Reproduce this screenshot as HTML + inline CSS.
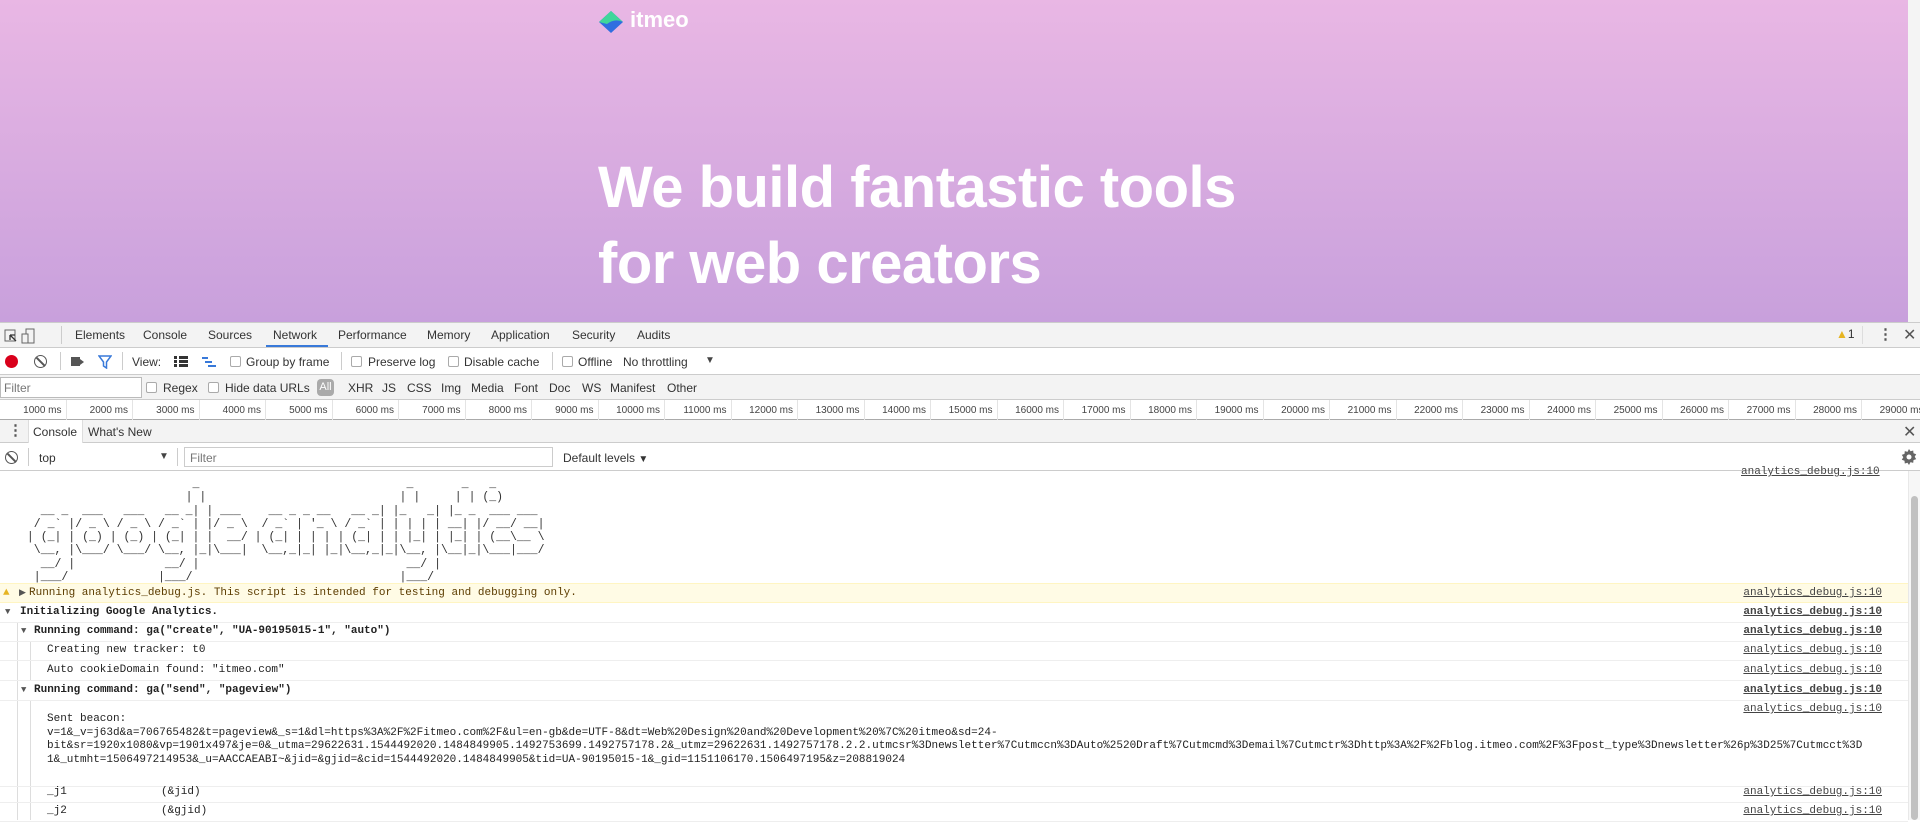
<!DOCTYPE html>
<html><head><meta charset="utf-8"><style>
*{margin:0;padding:0;box-sizing:border-box}
body{width:1920px;height:820px;overflow:hidden;background:#fff;font-family:"Liberation Sans",sans-serif;position:relative}
.abs{position:absolute;white-space:nowrap}
pre.abs{white-space:pre}
#hero{position:absolute;left:0;top:0;width:1908px;height:322px;background:linear-gradient(#e9b7e4,#c8a0dc)}
#sbtop{position:absolute;left:1908px;top:0;width:12px;height:322px;background:#f4f4f4}
h1{position:absolute;left:598px;top:150px;font-size:58px;line-height:76px;color:#fff;font-weight:bold;letter-spacing:-0.5px}
.bar{position:absolute;left:0;width:1920px;border-bottom:1px solid #ccc}
.t12{font-size:12px;color:#333}
.cb{display:inline-block;width:11px;height:11px;border:1px solid #aaa;border-radius:2px;background:#fff;position:absolute}
.mono{font-family:"Liberation Mono",monospace;font-size:11px}
.row{position:absolute;left:0;width:1908px;border-bottom:1px solid #eee;height:20px;line-height:19px;color:#222;overflow:hidden}
.lnk{position:absolute;right:26px;top:0;text-decoration:underline;color:#444}
.b{font-weight:bold}
</style></head><body>
<div id="hero"></div><div id="sbtop"></div>
<svg class="abs" style="left:598px;top:10px" width="26" height="24" viewBox="0 0 26 24"><path d="M13 1 L25 12 L13 23 L1 12Z" fill="#2f6ee0"/><path d="M13 1 L25 12 Q17 8 9 14 L1 12Z" fill="#3fd69a"/></svg>
<div class="abs" style="left:630px;top:7px;font-size:22px;font-weight:bold;color:#fff">itmeo</div>
<h1>We build fantastic tools<br>for web creators</h1>

<div class="bar" style="top:322px;height:26px;background:#f3f3f3;border-top:1px solid #ccc"></div>
<svg class="abs" style="left:4px;top:328px" width="36" height="16"><rect x="1" y="2" width="10" height="11" fill="none" stroke="#666"/><path d="M6 7l6 6M6 7v5M6 7h5" stroke="#333" stroke-width="1.3" fill="none"/><rect x="22" y="1" width="8" height="14" fill="none" stroke="#666"/><rect x="18" y="6" width="6" height="9" fill="#f3f3f3" stroke="#666"/></svg>
<div class="abs" style="left:61px;top:326px;width:1px;height:18px;background:#ccc"></div>
<div class="t12">
<span class="abs" style="left:75px;top:328px">Elements</span>
<span class="abs" style="left:143px;top:328px">Console</span>
<span class="abs" style="left:208px;top:328px">Sources</span>
<span class="abs" style="left:273px;top:328px">Network</span>
<span class="abs" style="left:338px;top:328px">Performance</span>
<span class="abs" style="left:427px;top:328px">Memory</span>
<span class="abs" style="left:491px;top:328px">Application</span>
<span class="abs" style="left:572px;top:328px">Security</span>
<span class="abs" style="left:637px;top:328px">Audits</span>
</div>
<div class="abs" style="left:266px;top:345px;width:62px;height:2px;background:#3879d9"></div>
<div class="abs" style="left:1836px;top:327px;font-size:12px;color:#333"><span style="color:#e6b422">▲</span>1</div>
<div class="abs" style="left:1862px;top:326px;width:1px;height:18px;background:#ddd"></div>
<div class="abs" style="left:1878px;top:325px;font-size:15px;color:#555;font-weight:bold">⋮</div>
<div class="abs" style="left:1903px;top:325px;font-size:16px;color:#555">✕</div>

<div class="bar" style="top:348px;height:27px;background:#fff"></div>
<div class="abs" style="left:5px;top:355px;width:13px;height:13px;border-radius:50%;background:#d9001b"></div>
<div class="abs" style="left:34px;top:355px;width:13px;height:13px;border-radius:50%;border:1.5px solid #555"></div>
<div class="abs" style="left:35px;top:361px;width:12px;height:1.5px;background:#555;transform:rotate(45deg)"></div>
<div class="abs" style="left:60px;top:352px;width:1px;height:18px;background:#ccc"></div>
<div class="abs" style="left:71px;top:357px;width:9px;height:9px;background:#555"></div><div class="abs" style="left:80px;top:359px;border:3px solid transparent;border-right:4px solid #555;transform:scaleX(-1)"></div>
<svg class="abs" style="left:98px;top:355px" width="14" height="14"><path d="M1 1h12l-4.5 6v6l-3-2V7Z" fill="none" stroke="#3879d9" stroke-width="1.5"/></svg>
<div class="abs" style="left:122px;top:352px;width:1px;height:18px;background:#ccc"></div>
<span class="abs t12" style="left:132px;top:355px">View:</span>
<svg class="abs" style="left:174px;top:356px" width="44" height="12"><g fill="#333"><rect x="0" y="0" width="3" height="3"/><rect x="5" y="0" width="9" height="3"/><rect x="0" y="4" width="3" height="3"/><rect x="5" y="4" width="9" height="3"/><rect x="0" y="8" width="3" height="3"/><rect x="5" y="8" width="9" height="3"/></g><g fill="#3879d9"><rect x="28" y="1" width="6" height="2"/><rect x="31" y="5" width="7" height="2"/><rect x="34" y="9" width="8" height="2"/></g></svg>
<span class="cb" style="left:230px;top:356px"></span><span class="abs t12" style="left:246px;top:355px">Group by frame</span>
<div class="abs" style="left:341px;top:352px;width:1px;height:18px;background:#ccc"></div>
<span class="cb" style="left:351px;top:356px"></span><span class="abs t12" style="left:368px;top:355px">Preserve log</span>
<span class="cb" style="left:448px;top:356px"></span><span class="abs t12" style="left:464px;top:355px">Disable cache</span>
<div class="abs" style="left:552px;top:352px;width:1px;height:18px;background:#ccc"></div>
<span class="cb" style="left:562px;top:356px"></span><span class="abs t12" style="left:578px;top:355px">Offline</span>
<span class="abs t12" style="left:623px;top:355px">No throttling</span>
<span class="abs" style="left:705px;top:355px;font-size:10px;color:#444">▼</span>

<div class="bar" style="top:375px;height:25px;background:#f3f3f3"></div>
<div class="abs" style="left:0;top:377px;width:142px;height:21px;background:#fff;border:1px solid #bbb"></div>
<span class="abs" style="left:4px;top:381px;font-size:12px;color:#777">Filter</span>
<span class="cb" style="left:146px;top:382px"></span><span class="abs t12" style="left:163px;top:381px">Regex</span>
<span class="cb" style="left:208px;top:382px"></span><span class="abs t12" style="left:225px;top:381px">Hide data URLs</span>
<span class="abs" style="left:317px;top:379px;width:17px;height:17px;border-radius:4px;background:#aaa;color:#fff;font-size:11px;line-height:17px;text-align:center">All</span>
<div class="t12">
<span class="abs" style="left:348px;top:381px">XHR</span><span class="abs" style="left:382px;top:381px">JS</span><span class="abs" style="left:407px;top:381px">CSS</span><span class="abs" style="left:441px;top:381px">Img</span><span class="abs" style="left:471px;top:381px">Media</span><span class="abs" style="left:514px;top:381px">Font</span><span class="abs" style="left:549px;top:381px">Doc</span><span class="abs" style="left:582px;top:381px">WS</span><span class="abs" style="left:610px;top:381px">Manifest</span><span class="abs" style="left:667px;top:381px">Other</span>
</div>

<div class="bar" style="top:400px;height:20px;background:#fff;border-bottom:1px solid #aaa"></div>
<div class="abs" style="left:0;top:400px;width:1920px;overflow:hidden;height:20px;display:flex;font-size:10px;color:#444">
<script>
for(let i=1;i<=29;i++)document.write('<div style="flex:none;width:66.5px;height:20px;border-right:1px solid #e4e4e4;text-align:right;padding:5px 4px 0 0;white-space:nowrap">'+i+'000 ms</div>');
</script>
</div>

<div class="bar" style="top:420px;height:23px;background:#f3f3f3"></div>
<div class="abs" style="left:8px;top:421px;font-size:15px;color:#555;font-weight:bold">⋮</div>
<div class="abs" style="left:28px;top:420px;width:55px;height:23px;background:#fff;border-left:1px solid #ddd;border-right:1px solid #ddd"></div>
<span class="abs t12" style="left:33px;top:425px">Console</span>
<span class="abs t12" style="left:88px;top:425px">What's New</span>
<div class="abs" style="left:1903px;top:422px;font-size:16px;color:#555">✕</div>

<div class="bar" style="top:443px;height:28px;background:#fff"></div>
<div class="abs" style="left:5px;top:451px;width:13px;height:13px;border-radius:50%;border:1.5px solid #555"></div>
<div class="abs" style="left:6px;top:457px;width:12px;height:1.5px;background:#555;transform:rotate(45deg)"></div>
<div class="abs" style="left:28px;top:448px;width:1px;height:18px;background:#ccc"></div>
<span class="abs t12" style="left:39px;top:451px">top</span>
<span class="abs" style="left:159px;top:451px;font-size:10px;color:#444">▼</span>
<div class="abs" style="left:177px;top:448px;width:1px;height:18px;background:#ccc"></div>
<div class="abs" style="left:184px;top:447px;width:369px;height:20px;border:1px solid #ccc"></div>
<span class="abs" style="left:190px;top:451px;font-size:12px;color:#777">Filter</span>
<span class="abs t12" style="left:563px;top:451px">Default levels <span style="font-size:10px">▼</span></span>
<svg class="abs" style="left:1901px;top:449px" width="16" height="16" viewBox="0 0 16 16"><path d="M8 0l1.5 2.3 2.7-.8.3 2.8 2.7 1-1.5 2.4 1.5 2.4-2.7 1-.3 2.8-2.7-.8L8 16l-1.5-2.3-2.7.8-.3-2.8-2.7-1L2.3 8.3.8 5.9l2.7-1 .3-2.8 2.7.8Z" fill="#666"/><circle cx="8" cy="8" r="2.5" fill="#fff"/></svg>

<div class="abs" style="left:1908px;top:471px;width:12px;height:349px;background:#f7f7f7;border-left:1px solid #e8e8e8"></div>
<div class="abs" style="left:1911px;top:496px;width:7px;height:324px;background:#c1c1c1;border-radius:4px"></div>
<div class="abs mono" style="left:1741px;top:466px;text-decoration:underline;color:#444">analytics_debug.js:10</div>
<pre class="abs mono" style="left:20px;top:478px;font-size:11.5px;line-height:13.3px;color:#333">                         _                              _       _   _
                        | |                            | |     | | (_)
   __ _  ___   ___   __ _| | ___    __ _ _ __   __ _| |_   _| |_ _  ___ ___
  / _` |/ _ \ / _ \ / _` | |/ _ \  / _` | '_ \ / _` | | | | | __| |/ __/ __|
 | (_| | (_) | (_) | (_| | |  __/ | (_| | | | | (_| | | |_| | |_| | (__\__ \
  \__, |\___/ \___/ \__, |_|\___|  \__,_|_| |_|\__,_|_|\__, |\__|_|\___|___/
   __/ |             __/ |                              __/ |
  |___/             |___/                              |___/</pre>

<div class="row mono" style="top:583px;background:#fffbe5;border-top:1px solid #fff5c2;border-bottom:1px solid #fff5c2;color:#5c3c00"><span class="abs" style="left:3px;top:0;color:#e6b422;font-size:11px">▲</span><span class="abs" style="left:19px;top:0;font-size:9px;color:#555">▶</span><span class="abs" style="left:29px">Running analytics_debug.js. This script is intended for testing and debugging only.</span><span class="lnk">analytics_debug.js:10</span></div>
<div class="row mono" style="top:603px"><span class="abs" style="left:5px;font-size:9px;color:#555">▼</span><span class="abs b" style="left:20px">Initializing Google Analytics.</span><span class="lnk b">analytics_debug.js:10</span></div>
<div class="abs" style="left:17px;top:623px;width:1px;height:197px;background:#ddd"></div>
<div class="row mono" style="top:622px"><span class="abs" style="left:21px;font-size:9px;color:#555">▼</span><span class="abs b" style="left:34px">Running command: ga("create", "UA-90195015-1", "auto")</span><span class="lnk b">analytics_debug.js:10</span></div>
<div class="abs" style="left:30px;top:642px;width:1px;height:39px;background:#ddd"></div>
<div class="row mono" style="top:641px"><span class="abs" style="left:47px">Creating new tracker: t0</span><span class="lnk">analytics_debug.js:10</span></div>
<div class="row mono" style="top:661px"><span class="abs" style="left:47px">Auto cookieDomain found: "itmeo.com"</span><span class="lnk">analytics_debug.js:10</span></div>
<div class="row mono" style="top:681px"><span class="abs" style="left:21px;font-size:9px;color:#555">▼</span><span class="abs b" style="left:34px">Running command: ga("send", "pageview")</span><span class="lnk b">analytics_debug.js:10</span></div>
<div class="abs" style="left:30px;top:701px;width:1px;height:119px;background:#ddd"></div>
<div class="row mono" style="top:700px;height:87px;border-bottom:1px solid #eee"><span class="lnk">analytics_debug.js:10</span>
<pre class="abs" style="left:47px;top:13px;width:1855px;overflow:hidden;line-height:13.5px;font-family:inherit;font-size:11px;color:#222">Sent beacon:
v=1&amp;_v=j63d&amp;a=706765482&amp;t=pageview&amp;_s=1&amp;dl=https%3A%2F%2Fitmeo.com%2F&amp;ul=en-gb&amp;de=UTF-8&amp;dt=Web%20Design%20and%20Development%20%7C%20itmeo&amp;sd=24-
bit&amp;sr=1920x1080&amp;vp=1901x497&amp;je=0&amp;_utma=29622631.1544492020.1484849905.1492753699.1492757178.2&amp;_utmz=29622631.1492757178.2.2.utmcsr%3Dnewsletter%7Cutmccn%3DAuto%2520Draft%7Cutmcmd%3Demail%7Cutmctr%3Dhttp%3A%2F%2Fblog.itmeo.com%2F%3Fpost_type%3Dnewsletter%26p%3D25%7Cutmcct%3D
1&amp;_utmht=1506497214953&amp;_u=AACCAEABI~&amp;jid=&amp;gjid=&amp;cid=1544492020.1484849905&amp;tid=UA-90195015-1&amp;_gid=1151106170.1506497195&amp;z=208819024</pre></div>
<div class="row mono" style="top:783px"><span class="abs" style="left:47px">_j1</span><span class="abs" style="left:161px">(&amp;jid)</span><span class="lnk">analytics_debug.js:10</span></div>
<div class="row mono" style="top:802px"><span class="abs" style="left:47px">_j2</span><span class="abs" style="left:161px">(&amp;gjid)</span><span class="lnk">analytics_debug.js:10</span></div>
</body></html>
